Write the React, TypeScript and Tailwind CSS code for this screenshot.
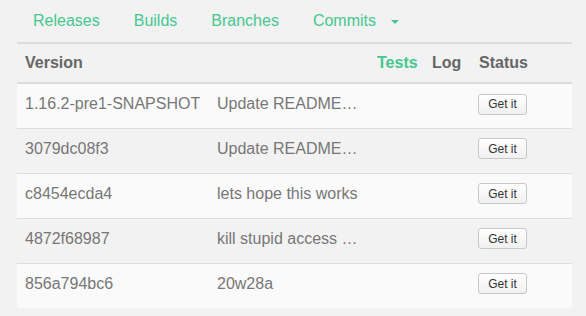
import React from "react";

const rows = [
  { version: "1.16.2-pre1-SNAPSHOT", message: "Update README…" },
  { version: "3079dc08f3", message: "Update README…" },
  { version: "c8454ecda4", message: "lets hope this works" },
  { version: "4872f68987", message: "kill stupid access …" },
  { version: "856a794bc6", message: "20w28a" },
];

export default function App() {
  return (
    <div
      className="w-[586px] h-[316px] bg-[#f2f2f2] text-[16px] text-[#777]"
      style={{ fontFamily: '"Liberation Sans", Arial, sans-serif' }}
    >
      <nav className="flex items-center h-[42px] pl-[33px] text-[#45c78f]">
        <a className="mr-[34px]">Releases</a>
        <a className="mr-[34px]">Builds</a>
        <a className="mr-[34px]">Branches</a>
        <a className="flex items-center">
          Commits
          <span className="ml-[15px] mt-[2px] w-0 h-0 border-x-[4px] border-x-transparent border-t-[4px] border-t-[#45c78f]" />
        </a>
      </nav>
      <table className="ml-[17px] w-[555px] table-fixed border-collapse">
        <colgroup>
          <col className="w-[192px]" />
          <col className="w-[160px]" />
          <col className="w-[55px]" />
          <col className="w-[47px]" />
          <col />
        </colgroup>
        <thead>
          <tr className="h-[40px] border-y-2 border-[#dddddd] font-bold text-[#666]">
            <th className="text-left pl-[8px]">Version</th>
            <th />
            <th className="text-left pl-[8px] text-[#45c78f]">Tests</th>
            <th className="text-left pl-[8px]">Log</th>
            <th className="text-left pl-[8px]">Status</th>
          </tr>
        </thead>
        <tbody>
          {rows.map((r, i) => (
            <tr
              key={r.version}
              className={`h-[45px] ${i % 2 === 0 ? "bg-[#fafafa]" : "bg-[#f2f2f2]"} ${
                i < rows.length - 1 ? "border-b border-[#dddddd]" : ""
              }`}
            >
              <td className="pl-[8px] align-top pt-[8px] whitespace-nowrap">{r.version}</td>
              <td className="pl-[8px] align-top pt-[8px] whitespace-nowrap">{r.message}</td>
              <td />
              <td />
              <td className="pl-[7px] align-top pt-[7px]">
                <button className="h-[21px] w-[49px] rounded-[3px] border border-[#c8c8c8] bg-gradient-to-b from-white to-[#f0f0f0] text-[12px] text-[#333] leading-none">
                  Get it
                </button>
              </td>
            </tr>
          ))}
        </tbody>
      </table>
    </div>
  );
}
